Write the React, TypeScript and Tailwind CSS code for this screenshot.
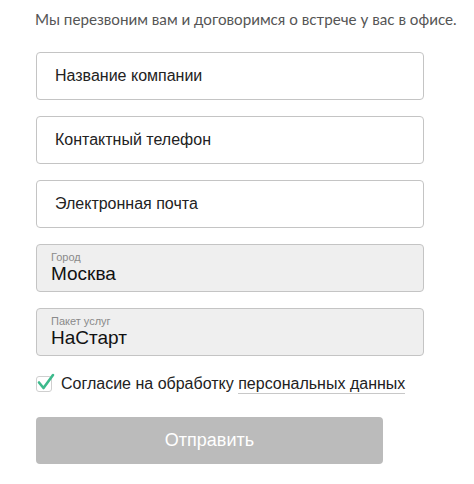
const fields = ["Название компании", "Контактный телефон", "Электронная почта"];

const filled = [
  { label: "Город", value: "Москва" },
  { label: "Пакет услуг", value: "НаСтарт" },
];

export default function App() {
  return (
    <div className="w-[474px] h-[484px] bg-white pl-[36px] pt-[8px] font-['Liberation_Sans',Arial,sans-serif]">
      <p className="font-['Lato',sans-serif] text-[15.2px] leading-[22px] text-[#555] -ml-px whitespace-nowrap">
        Мы перезвоним вам и договоримся о встрече у вас в офисе.
      </p>

      <div className="mt-[22px] flex flex-col gap-[16px] w-[388px]">
        {fields.map((f) => (
          <div
            key={f}
            className="h-[48px] flex items-center px-[18px] border border-[#c4c4c4] rounded-[4px] bg-white text-[16px] text-[#222]"
          >
            {f}
          </div>
        ))}
        {filled.map((f) => (
          <div
            key={f.label}
            className="h-[48px] flex flex-col justify-center px-[14px] border border-[#c4c4c4] rounded-[4px] bg-[#efefef]"
          >
            <span className="text-[11px] leading-[12px] text-[#8a8a8a]">{f.label}</span>
            <span className="text-[19px] leading-[22px] text-[#111]">{f.value}</span>
          </div>
        ))}
      </div>

      <div className="mt-[17px] flex items-center h-[22px]">
        <div className="relative w-[16px] h-[16px] border border-[#cfcfcf] rounded-[3px] bg-white">
          <svg
            viewBox="0 0 20 20"
            className="absolute -top-[5px] -left-[1px] w-[20px] h-[20px]"
            fill="none"
            stroke="#3dba8c"
            strokeWidth="2.6"
            strokeLinecap="round"
            strokeLinejoin="round"
          >
            <path d="M3 10.5 L7.5 16 L17 3" />
          </svg>
        </div>
        <span className="ml-[9px] text-[16px] text-[#222]">
          Согласие на обработку{" "}
          <span className="border-b border-[#c8c8c8] pb-[1px]">персональных данных</span>
        </span>
      </div>

      <button className="mt-[22px] w-[347px] h-[47px] rounded-[4px] bg-[#bbbbbb] text-white text-[18px]">
        Отправить
      </button>
    </div>
  );
}
